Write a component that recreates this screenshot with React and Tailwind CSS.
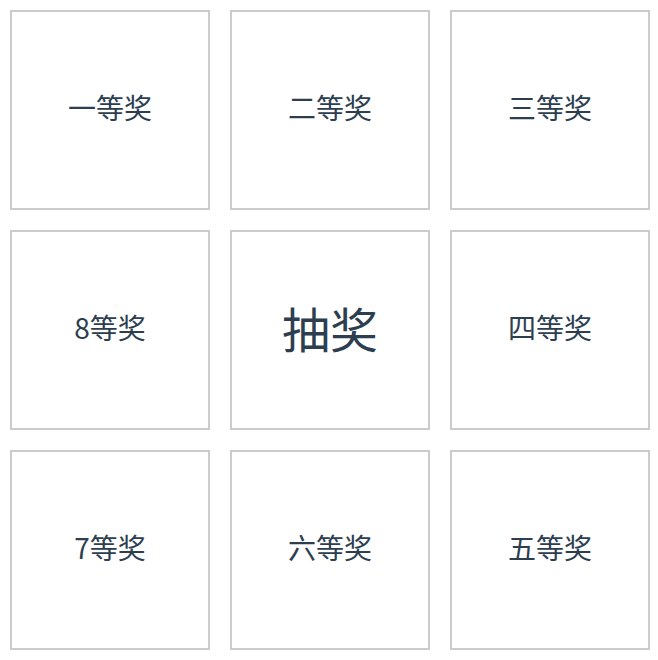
const PRIZES = ['一等奖', '二等奖', '三等奖', '8等奖', '抽奖', '四等奖', '7等奖', '六等奖', '五等奖'];

export default function App() {
  return (
    <div
      className="w-[658px] h-[660px] bg-white p-[10px] text-[#2c3e50]"
      style={{ fontFamily: '"Noto Sans CJK SC", "Noto Sans", sans-serif' }}
    >
      <div className="grid grid-cols-[200px_200px_200px] grid-rows-[200px_200px_200px] gap-5">
        {PRIZES.map((name, i) => (
          <div
            key={i}
            className="flex items-center justify-center border-2 border-[#cccccc] bg-white pb-[6px]"
          >
            <span className={i === 4 ? 'text-[48px] leading-none' : 'text-[28px] leading-none'}>
              {name}
            </span>
          </div>
        ))}
      </div>
    </div>
  );
}
